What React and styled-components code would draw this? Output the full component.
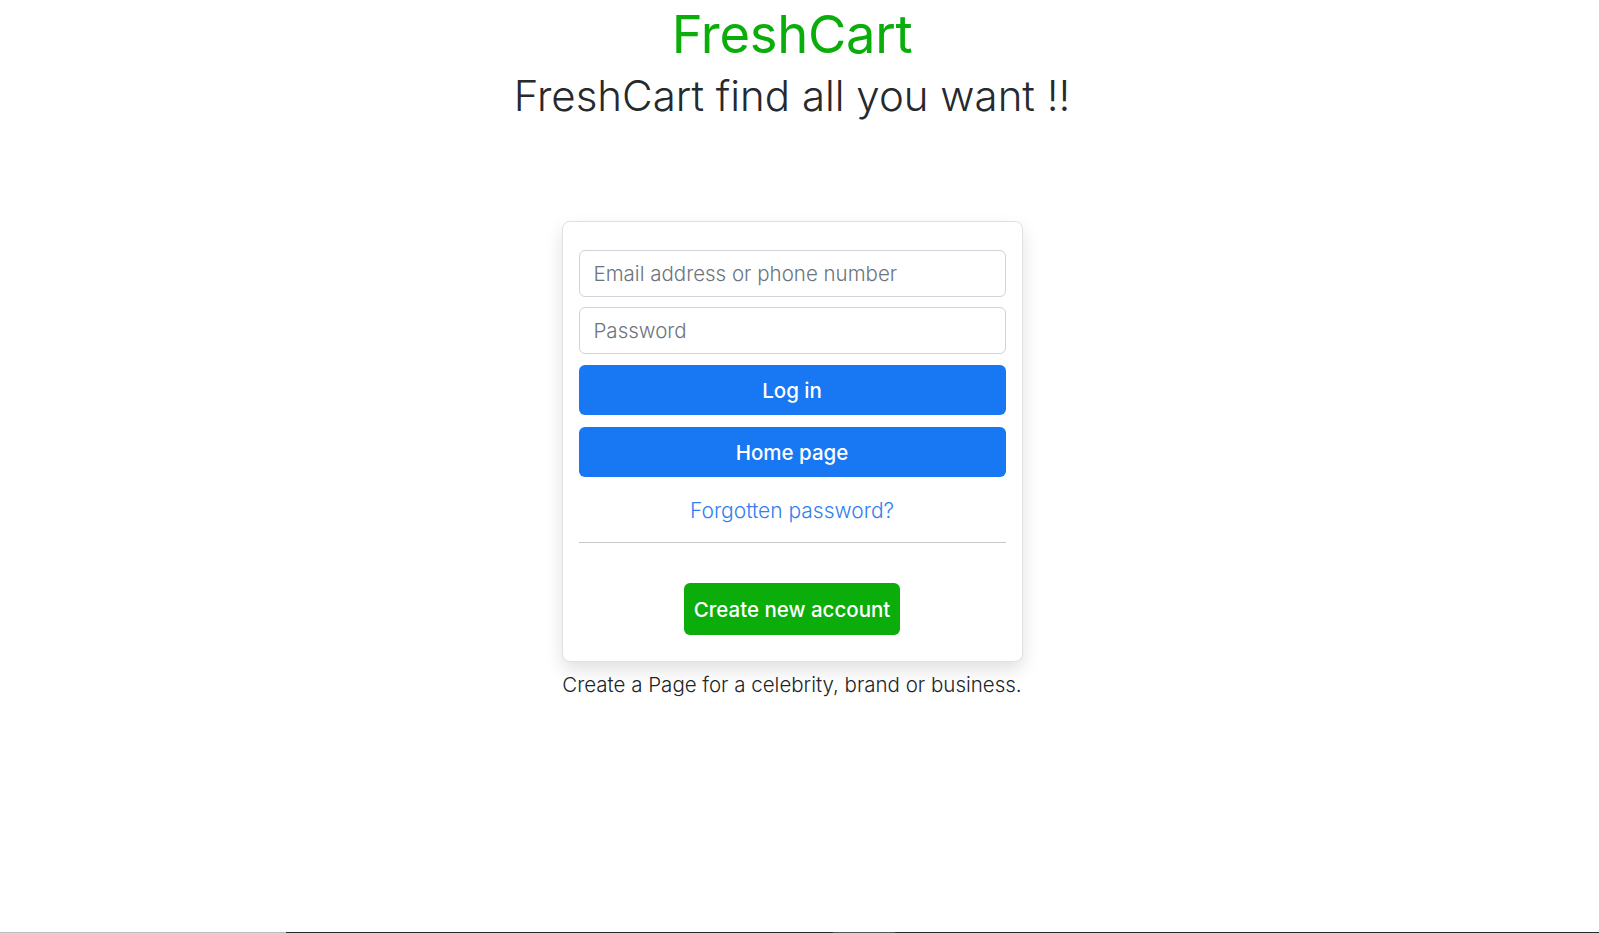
import styled, { createGlobalStyle } from "styled-components";

// LOGIN PAGE ---- brand header, login card and footer edge

const GlobalStyle = createGlobalStyle`
  html, body {
    margin: 0;
    padding: 0;
    background: #ffffff;
    font-family: "Inter", "Noto Sans", "Liberation Sans", sans-serif;
    color: #212529;
  }
  * {
    box-sizing: border-box;
  }
`;

const App = () => {
  return (
    <>
      <GlobalStyle />
      <Page>
        <Header>
          <Brand>FreshCart</Brand>
          <Tagline>FreshCart find all you want !!</Tagline>
        </Header>
        <Card>
          <Input type="text" placeholder="Email address or phone number" />
          <Input type="password" placeholder="Password" />
          <Button color="#1877f2">Log in</Button>
          <Button color="#1877f2">Home page</Button>
          <Forgot href="#">Forgotten password?</Forgot>
          <Divider />
          <CreateRow>
            <CreateButton>Create new account</CreateButton>
          </CreateRow>
        </Card>
        <Caption>Create a Page for a celebrity, brand or business.</Caption>
      </Page>
      <FooterEdge>
        <Segment width="286px" color="#bdbdbd" />
        <Segment width="547px" color="#2b2b2b" />
        <Segment width="62px" color="#555555" />
        <Segment grow color="#2b2b2b" />
      </FooterEdge>
    </>
  );
};

const Page = styled.main`
  height: 932px;
  display: flex;
  flex-direction: column;
  align-items: center;
  padding-right: 15px;
`;

const Header = styled.header`
  display: flex;
  flex-direction: column;
  align-items: center;
  margin-bottom: 97px;
`;

const Brand = styled.h1`
  margin: 0;
  font-size: 52.5px;
  font-weight: 400;
  line-height: 68px;
  color: #0aad0a;
  letter-spacing: -0.3px;
`;

const Tagline = styled.h2`
  margin: 0;
  font-size: 42px;
  font-weight: 300;
  line-height: 56px;
  color: #26292d;
`;

const Card = styled.section`
  width: 461px;
  display: flex;
  flex-direction: column;
  padding: 28px 16px 26px;
  border: 1px solid #dee2e6;
  border-radius: 8px;
  background: #fff;
  box-shadow: 0 8px 18px rgba(0, 0, 0, 0.12);
`;

const Input = styled.input`
  height: 47px;
  width: 100%;
  margin-bottom: 10px;
  padding: 0 14px;
  border: 1px solid #ced4da;
  border-radius: 6px;
  font-family: inherit;
  font-size: 20.5px;
  font-weight: 300;
  color: #212529;
  outline: none;

  &::placeholder {
    color: #6c757d;
  }
`;

const Button = styled.button`
  height: 50px;
  width: 100%;
  margin-top: 1px;
  margin-bottom: 11px;
  border: none;
  border-radius: 6px;
  background: ${(p) => p.color};
  color: #fff;
  font-family: inherit;
  font-size: 20.5px;
  font-weight: 500;
  cursor: pointer;
`;

const Forgot = styled.a`
  align-self: center;
  margin-top: 10px;
  font-size: 21px;
  font-weight: 300;
  color: #2f7ff0;
  text-decoration: none;
  line-height: 26px;
`;

const Divider = styled.hr`
  width: 100%;
  margin: 18px 0 40px;
  border: none;
  border-top: 1px solid #c8c8c8;
`;

const CreateRow = styled.div`
  display: flex;
  justify-content: center;
`;

const CreateButton = styled.button`
  height: 52px;
  padding: 0 10px;
  border: none;
  border-radius: 6px;
  background: #0aad0a;
  color: #fff;
  font-family: inherit;
  font-size: 20.5px;
  font-weight: 500;
  cursor: pointer;
`;

const Caption = styled.p`
  margin: 10px 0 0;
  font-size: 20.5px;
  font-weight: 300;
  color: #212529;
`;

const FooterEdge = styled.div`
  display: flex;
  height: 1px;
`;

const Segment = styled.div`
  width: ${(p) => p.width || "auto"};
  flex: ${(p) => (p.grow ? 1 : "none")};
  background: ${(p) => p.color};
`;

export default App;
